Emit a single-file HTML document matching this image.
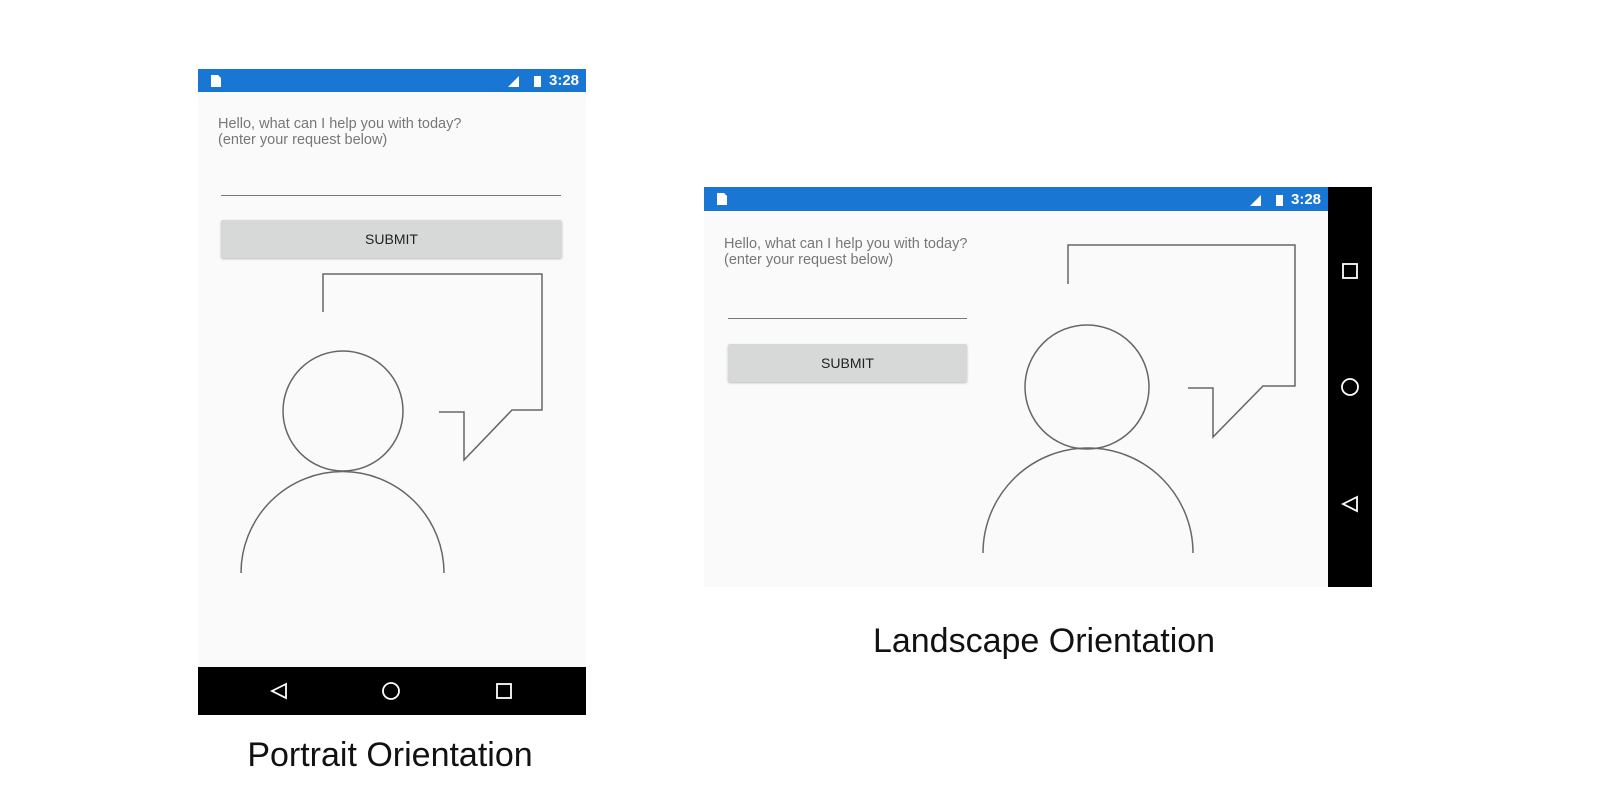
<!DOCTYPE html><html><head><style>
body{margin:0;width:1600px;height:800px;background:#fff;position:relative;overflow:hidden;font-family:"Liberation Sans",sans-serif}
.a{position:absolute}
.t{color:#777;font-size:14.5px;line-height:16px}
.btn{background:#d7d8d8;box-shadow:0 1px 2px rgba(0,0,0,.25);border-radius:2px;font-size:14px;color:#222;text-align:center}
.st{color:#fff;font-size:15px;font-weight:bold}
</style></head><body>
<div class="a" style="left:198px;top:69px;width:388px;height:646px;background:#fafafa"></div>
<div class="a" style="left:198px;top:69px;width:388px;height:23px;background:#1976d2"></div>
<div class="a" style="left:198px;top:667px;width:388px;height:48px;background:#000"></div>
<div class="a" style="left:704px;top:187px;width:668px;height:400px;background:#fafafa"></div>
<div class="a" style="left:704px;top:187px;width:624px;height:24px;background:#1976d2"></div>
<div class="a" style="left:1328px;top:187px;width:44px;height:400px;background:#000"></div>
<div class="a st" style="left:549px;top:72px">3:28</div>
<div class="a st" style="left:1291px;top:191px">3:28</div>
<div class="a t" style="left:218px;top:116px">Hello, what can I help you with today?<br>(enter your request below)</div>
<div class="a t" style="left:724px;top:236px">Hello, what can I help you with today?<br>(enter your request below)</div>
<div class="a" style="left:221px;top:195px;width:340px;height:1px;background:#777"></div>
<div class="a" style="left:728px;top:318px;width:239px;height:1px;background:#777"></div>
<div class="a btn" style="left:221px;top:220px;width:341px;height:38px;line-height:38px">SUBMIT</div>
<div class="a btn" style="left:728px;top:344px;width:239px;height:38px;line-height:38px">SUBMIT</div>
<div class="a" style="left:0;top:736px;width:780px;text-align:center;font-size:34px;color:#111">Portrait Orientation</div>
<div class="a" style="left:744px;top:622px;width:600px;text-align:center;font-size:34px;color:#111">Landscape Orientation</div>
<svg class="a" style="left:0;top:0" width="1600" height="800">
<g fill="none" stroke="#666" stroke-width="1.5">
<circle cx="343" cy="411" r="60"/>
<path d="M241,573 A101.5,101.5 0 0 1 444,573"/>
<path d="M323,312 L323,274 L542,274 L542,410 L512,410 L464,460 L464,412 L439,412"/>
<circle cx="1087" cy="387" r="62"/>
<path d="M983,553 A105,105 0 0 1 1193,553"/>
<path d="M1068,284 L1068,245 L1295,245 L1295,386 L1263,386 L1213,437 L1213,388 L1188,388"/>
</g>
<g fill="none" stroke="#fff" stroke-width="1.8">
<path d="M286,684 L272,691 L286,698 Z"/><circle cx="391" cy="691" r="8"/><rect x="497" y="684" width="14" height="14"/>
<rect x="1343" y="264" width="14" height="14"/><circle cx="1350" cy="387" r="8"/><path d="M1357,497 L1343,504 L1357,511 Z"/>
</g>
<g fill="#fff">
<path d="M211,75 h7 l3,3 v9 h-10 z"/><path d="M717,193 h7 l3,3 v9 h-10 z"/>
<path d="M508,87 L519,76 L519,87 Z"/><rect x="534" y="76" width="7" height="11"/>
<path d="M1250,206 L1261,195 L1261,206 Z"/><rect x="1276" y="195" width="7" height="11"/>
</g>
</svg>
</body></html>
